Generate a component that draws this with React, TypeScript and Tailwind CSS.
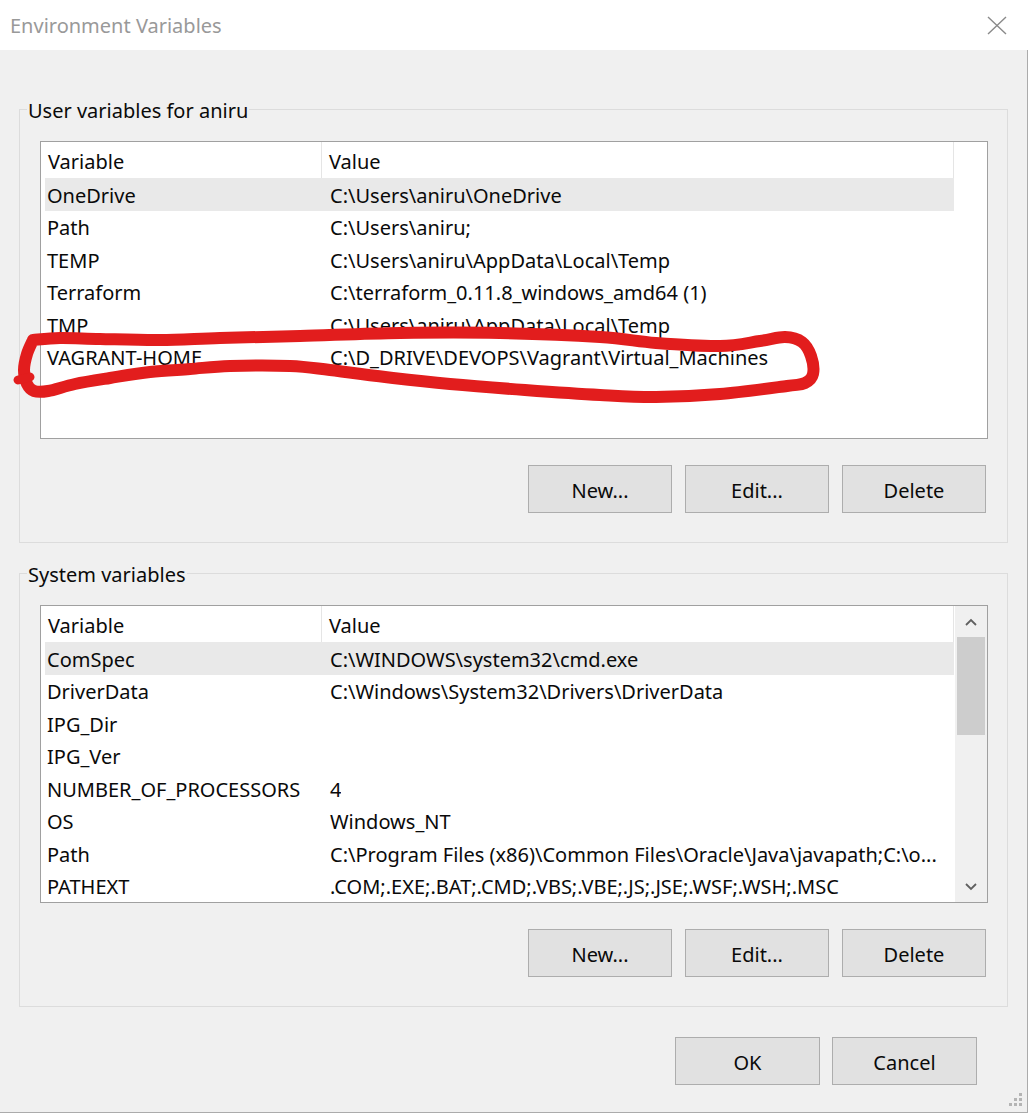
import React from 'react';

type Row = [string, string];

const userRows: Row[] = [
  ['OneDrive', 'C:\\Users\\aniru\\OneDrive'],
  ['Path', 'C:\\Users\\aniru;'],
  ['TEMP', 'C:\\Users\\aniru\\AppData\\Local\\Temp'],
  ['Terraform', 'C:\\terraform_0.11.8_windows_amd64 (1)'],
  ['TMP', 'C:\\Users\\aniru\\AppData\\Local\\Temp'],
  ['VAGRANT-HOME', 'C:\\D_DRIVE\\DEVOPS\\Vagrant\\Virtual_Machines'],
];

const systemRows: Row[] = [
  ['ComSpec', 'C:\\WINDOWS\\system32\\cmd.exe'],
  ['DriverData', 'C:\\Windows\\System32\\Drivers\\DriverData'],
  ['IPG_Dir', ''],
  ['IPG_Ver', ''],
  ['NUMBER_OF_PROCESSORS', '4'],
  ['OS', 'Windows_NT'],
  ['Path', 'C:\\Program Files (x86)\\Common Files\\Oracle\\Java\\javapath;C:\\o...'],
  ['PATHEXT', '.COM;.EXE;.BAT;.CMD;.VBS;.VBE;.JS;.JSE;.WSF;.WSH;.MSC'],
];

// red marker loop drawn over the VAGRANT-HOME row
const loopPoints: number[][] = [
  [33, 340], [60, 338], [100, 339], [160, 340], [220, 338], [300, 336], [400, 333], [500, 333],
  [600, 337], [656, 343], [720, 346], [760, 341], [785, 337], [802, 342], [811, 356], [813, 374],
  [805, 383], [787, 386], [720, 394], [656, 397], [600, 395], [525, 390], [450, 384], [393, 378],
  [330, 370], [290, 366], [230, 366], [190, 369], [150, 372], [110, 378], [75, 384], [48, 391],
  [34, 391], [27, 384], [24, 370], [27, 354], [33, 340],
];

function smoothPath(pts: number[][]) {
  let d = `M ${pts[0][0]} ${pts[0][1]}`;
  for (let i = 0; i < pts.length - 1; i++) {
    const p0 = pts[i - 1] || pts[i];
    const p1 = pts[i];
    const p2 = pts[i + 1];
    const p3 = pts[i + 2] || p2;
    const c1x = p1[0] + (p2[0] - p0[0]) / 6;
    const c1y = p1[1] + (p2[1] - p0[1]) / 6;
    const c2x = p2[0] - (p3[0] - p1[0]) / 6;
    const c2y = p2[1] - (p3[1] - p1[1]) / 6;
    d += ` C ${c1x} ${c1y}, ${c2x} ${c2y}, ${p2[0]} ${p2[1]}`;
  }
  return d;
}

const Chevron = ({ up }: { up?: boolean }) => (
  <svg width="12" height="8" viewBox="0 0 12 8">
    <polyline
      points={up ? '1,7 6,2 11,7' : '1,1 6,6 11,1'}
      fill="none"
      stroke="#606060"
      strokeWidth="1.8"
    />
  </svg>
);

const Scrollbar = () => (
  <div className="w-[32px] shrink-0 bg-[#f0f0f0] flex flex-col items-center">
    <div className="h-[31px] flex items-center justify-center">
      <Chevron up />
    </div>
    <div className="w-[28px] h-[98px] bg-[#cdcdcd]" />
    <div className="flex-1" />
    <div className="h-[31px] flex items-center justify-center">
      <Chevron />
    </div>
  </div>
);

const ListView = ({ rows, scrollbar }: { rows: Row[]; scrollbar?: boolean }) => (
  <div className="h-[298px] border border-[#a0a0a0] bg-white flex overflow-hidden text-[20px] text-[#0a0a0a]">
    <div className="flex-1 min-w-0 flex flex-col">
      <div className="flex h-[36px] shrink-0">
        <div className="w-[281px] pl-[7px] pt-[3px] flex items-center border-r border-[#e5e5e5]">Variable</div>
        <div className="w-[632px] pl-[7px] pt-[3px] flex items-center border-r border-[#e5e5e5]">Value</div>
      </div>
      {rows.map((r, i) => (
        <div
          key={r[0]}
          className={`ml-[4px] w-[909px] h-[32.5px] shrink-0 pt-[3px] flex items-center ${i === 0 ? 'bg-[#e9e9e9]' : ''}`}
        >
          <div className="w-[277px] shrink-0 pl-[2px] whitespace-nowrap">{r[0]}</div>
          <div className="pl-[8px] whitespace-nowrap overflow-hidden">{r[1]}</div>
        </div>
      ))}
    </div>
    {scrollbar && <Scrollbar />}
  </div>
);

const Button = ({ label, w = 'w-[144px]' }: { label: string; w?: string }) => (
  <button className={`${w} h-[48px] pt-[3px] bg-[#e1e1e1] border border-[#adadad] text-[20px] text-[#0a0a0a]`}>
    {label}
  </button>
);

const GroupBox = ({ title, rows, scrollbar }: { title: string; rows: Row[]; scrollbar?: boolean }) => (
  <fieldset className="border border-[#dcdcdc] p-0">
    <legend className="ml-[7px] px-[1px] pt-[3px] leading-[28px] text-[20px] text-[#0a0a0a]">{title}</legend>
    <div className="pl-[20px] pr-[19px] pt-[16px] pb-[29px]">
      <ListView rows={rows} scrollbar={scrollbar} />
      <div className="mt-[26px] mr-[2px] flex justify-end gap-[13px]">
        <Button label="New..." />
        <Button label="Edit..." />
        <Button label="Delete" />
      </div>
    </div>
  </fieldset>
);

export default function App() {
  return (
    <div className="relative w-[1028px] h-[1115px] overflow-hidden bg-white flex flex-col font-['Noto_Sans',sans-serif]">
      {/* title bar */}
      <div className="h-[50px] shrink-0 bg-white flex items-center justify-between pl-[10px] pr-[21px]">
        <span className="pt-[2px] text-[20px] text-[#999]">Environment Variables</span>
        <svg width="20" height="19" viewBox="0 0 20 19">
          <path d="M1 1 L19 18 M19 1 L1 18" stroke="#8a8a8a" strokeWidth="1.4" fill="none" />
        </svg>
      </div>

      {/* dialog body */}
      <div className="relative flex-1 bg-[#f0f0f0] border-r border-b border-[#ababab] pl-[19px] pr-[19px] pt-[44px] flex flex-col">
        <GroupBox title="User variables for aniru" rows={userRows} />
        <div className="mt-[15px]">
          <GroupBox title="System variables" rows={systemRows} scrollbar />
        </div>
        <div className="mt-[30px] mr-[31px] flex justify-end gap-[12px]">
          <Button label="OK" w="w-[145px]" />
          <Button label="Cancel" w="w-[145px]" />
        </div>

        {/* size grip */}
        <svg className="absolute right-[4px] bottom-[4px]" width="16" height="16" viewBox="0 0 16 16">
          {[
            [12, 1], [7, 6], [12, 6], [2, 11], [7, 11], [12, 11],
          ].map(([x, y]) => (
            <rect key={`${x}-${y}`} x={x} y={y} width="3" height="3" fill="#b4b4b4" />
          ))}
        </svg>
      </div>
      <div className="h-[2px] shrink-0 bg-white" />

      {/* red annotation */}
      <svg
        className="absolute left-0 top-0 pointer-events-none"
        width="1028"
        height="1115"
        viewBox="0 0 1028 1115"
      >
        <path
          d={smoothPath(loopPoints)}
          fill="none"
          stroke="#e21d1d"
          strokeWidth="12"
          strokeLinecap="round"
          strokeLinejoin="round"
        />
        <path d="M18 380 L30 377" stroke="#e21d1d" strokeWidth="9" strokeLinecap="round" />
      </svg>
    </div>
  );
}
